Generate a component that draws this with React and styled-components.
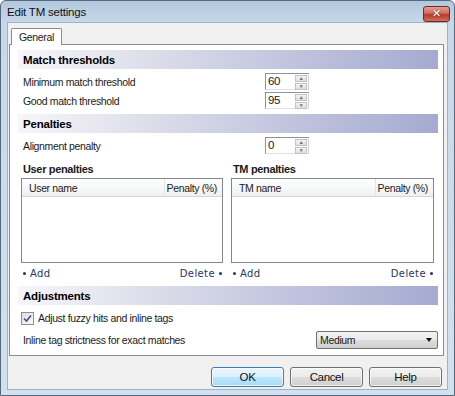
import React from 'react';
import styled, { createGlobalStyle } from 'styled-components';

const Global = createGlobalStyle`
  html, body { margin: 0; padding: 0; background: #ffffff; }
  body { font-family: 'Liberation Sans', Arial, sans-serif; font-size: 10.5px; letter-spacing: -0.35px; color: #1a1a1a; }
  * { box-sizing: border-box; }
`;

const Window = styled.div`
  width: 455px;
  height: 396px;
  display: flex;
  flex-direction: column;
  background: linear-gradient(180deg, #b3c8dd 0px, #c8d8ea 22px, #d2e0ef 100%);
  border: 1px solid #55687e;
  border-radius: 6px 6px 0 0;
  overflow: hidden;
`;

const TitleBar = styled.div`
  height: 21px;
  display: flex;
  align-items: center;
  justify-content: space-between;
  padding: 1px 4px 0 6px;
  font-size: 11.5px;
  letter-spacing: -0.2px;
  color: #111;
`;

const CloseButton = styled.div`
  width: 27px;
  height: 16px;
  margin-top: 3px;
  border: 1px solid #6b2b26;
  border-radius: 3px;
  background: linear-gradient(180deg, #e2a296 0%, #cf6b5c 45%, #b8392b 55%, #d1705c 100%);
  display: flex;
  align-items: center;
  justify-content: center;
  color: #fff;
  font-weight: bold;
  font-size: 11px;
  font-family: 'DejaVu Sans', sans-serif;
  text-shadow: 0 0 2px #6b2b26;
`;

const Client = styled.div`
  flex: 1;
  margin: 0 6px 5px 6px;
  background: #f0f0f0;
  border: 1px solid #9fb1c4;
  padding: 5px 5px 0 1px;
  display: flex;
  flex-direction: column;
`;

const TabStrip = styled.div`
  display: flex;
  padding-left: 2px;
  height: 17px;
  position: relative;
  z-index: 1;
`;

const Tab = styled.div`
  height: 17px;
  padding: 0 7px;
  background: #ffffff;
  border: 1px solid #898c95;
  border-bottom: none;
  border-radius: 2px 2px 0 0;
  display: flex;
  align-items: center;
`;

const Panel = styled.div`
  width: 435px;
  height: 312px;
  margin-top: -1px;
  background: #ffffff;
  border: 1px solid #898c95;
  padding: 5px 5px 0 8px;
  display: flex;
  flex-direction: column;
`;

const SectionHeader = styled.div`
  height: 19px;
  flex-shrink: 0;
  display: flex;
  align-items: center;
  padding-left: 5px;
  margin-top: ${p => p.$top || 0}px;
  background: linear-gradient(90deg, #f6f6f9 0%, #d9dbe8 35%, #bcc0dc 70%, #a6aad0 100%);
  font-weight: bold;
  font-size: 11.5px;
  letter-spacing: -0.2px;
  color: #000;
`;

const FieldRow = styled.div`
  display: flex;
  align-items: center;
  height: 17px;
  padding-left: 5px;
  margin-top: ${p => p.$top || 0}px;
`;

const FieldLabel = styled.div`
  width: 242px;
`;

const Spinner = styled.div`
  display: flex;
  width: 44px;
  height: 17px;
  border: 1px solid #8d939c;
  border-right-color: #cfd3d9;
  border-bottom-color: #dde1e6;
  background: #fff;
`;

const SpinValue = styled.div`
  flex: 1;
  padding-left: 2px;
  font-size: 11.5px;
  line-height: 15px;
`;

const SpinButtons = styled.div`
  width: 13px;
  display: flex;
  flex-direction: column;
  gap: 1px;
  padding: 1px 1px 1px 0;
`;

const SpinArrow = styled.div`
  flex: 1;
  background: linear-gradient(180deg, #f4f4f4, #dedede);
  border: 1px solid #c3c3c3;
  display: flex;
  align-items: center;
  justify-content: center;
  font-size: 5px;
  color: #6d6d6d;
  line-height: 1;
`;

const Lists = styled.div`
  display: grid;
  grid-template-columns: 202px 203px;
  gap: 8px;
  margin: 8px 4px 0 3px;
`;

const ListBlock = styled.div`
  display: flex;
  flex-direction: column;
`;

const ListTitle = styled.div`
  font-weight: bold;
  font-size: 11px;
  height: 14px;
  line-height: 14px;
  padding-left: 2px;
  margin-bottom: 2px;
`;

const ListView = styled.div`
  height: 85px;
  border: 1px solid #828790;
  background: #fff;
`;

const ListHeader = styled.div`
  display: flex;
  height: 18px;
  border-bottom: 1px solid #d5d5d5;
  background: linear-gradient(180deg, #ffffff 0%, #f7f8fa 50%, #eef0f3 100%);
`;

const HeaderCell = styled.div`
  flex: ${p => (p.$grow ? 1 : 'none')};
  width: ${p => (p.$w ? `${p.$w}px` : 'auto')};
  display: flex;
  align-items: center;
  justify-content: ${p => (p.$right ? 'flex-end' : 'flex-start')};
  padding: ${p => (p.$right ? '0 5px 0 2px' : '0 4px 0 7px')};
  border-left: ${p => (p.$divider ? '1px solid #e3e4e6' : 'none')};
  white-space: nowrap;
  color: #222;
`;

const LinkRow = styled.div`
  display: flex;
  justify-content: space-between;
  height: 14px;
  margin-top: 3px;
  padding: 0 1px 0 2px;
  font-family: 'DejaVu Sans', Verdana, sans-serif;
  font-size: 10px;
  letter-spacing: 0.4px;
  color: #2b3566;
`;

const Link = styled.span`
  display: flex;
  align-items: center;
  gap: 4px;
`;

const Bullet = styled.span`
  width: 3px;
  height: 3px;
  border-radius: 50%;
  background: #2b3566;
`;

const CheckRow = styled.div`
  display: flex;
  align-items: center;
  gap: 4px;
  margin: 6px 0 0 3px;
  height: 14px;
`;

const CheckBox = styled.div`
  width: 13px;
  height: 13px;
  border: 1px solid #8f8f8f;
  background: linear-gradient(135deg, #dcdcdc, #fafafa);
  display: flex;
  align-items: center;
  justify-content: center;
`;

const SelectRow = styled.div`
  display: flex;
  align-items: center;
  justify-content: space-between;
  padding-left: 5px;
  margin-top: 6px;
  height: 18px;
`;

const Select = styled.div`
  width: 122px;
  height: 18px;
  border: 1px solid #707070;
  border-radius: 2px;
  background: linear-gradient(180deg, #f2f2f2 0%, #ebebeb 50%, #dddddd 51%, #cfcfcf 100%);
  display: flex;
  align-items: center;
  justify-content: space-between;
  padding: 0 5px 0 3px;
`;

const Caret = styled.span`
  width: 0;
  height: 0;
  border-left: 3px solid transparent;
  border-right: 3px solid transparent;
  border-top: 4px solid #111;
`;

const ButtonRow = styled.div`
  display: flex;
  justify-content: flex-end;
  gap: 6px;
  margin-top: 11px;
`;

const Button = styled.div`
  width: 73px;
  height: 20px;
  border: 1px solid ${p => (p.$default ? '#3c7fb1' : '#707070')};
  border-radius: 3px;
  background: ${p =>
    p.$default
      ? 'linear-gradient(180deg, #eaf6fd 0%, #d9f0fc 50%, #bee6fd 51%, #a7d9f5 100%)'
      : 'linear-gradient(180deg, #f2f2f2 0%, #ebebeb 50%, #dddddd 51%, #cfcfcf 100%)'};
  box-shadow: inset 0 0 0 1px rgba(255, 255, 255, 0.7);
  display: flex;
  align-items: center;
  justify-content: center;
  font-size: 11.5px;
  color: #111;
`;

const Spin = ({ value }) => (
  <Spinner>
    <SpinValue>{value}</SpinValue>
    <SpinButtons>
      <SpinArrow>▲</SpinArrow>
      <SpinArrow>▼</SpinArrow>
    </SpinButtons>
  </Spinner>
);

const PenaltyList = ({ title, nameCol }) => (
  <ListBlock>
    <ListTitle>{title}</ListTitle>
    <ListView>
      <ListHeader>
        <HeaderCell $grow>{nameCol}</HeaderCell>
        <HeaderCell $w={58} $right $divider>Penalty (%)</HeaderCell>
      </ListHeader>
    </ListView>
    <LinkRow>
      <Link><Bullet />Add</Link>
      <Link>Delete<Bullet /></Link>
    </LinkRow>
  </ListBlock>
);

const App = () => (
  <>
    <Global />
    <Window>
      <TitleBar>
        <span>Edit TM settings</span>
        <CloseButton>✕</CloseButton>
      </TitleBar>
      <Client>
        <TabStrip>
          <Tab>General</Tab>
        </TabStrip>
        <Panel>
          <SectionHeader>Match thresholds</SectionHeader>
          <FieldRow $top={4}>
            <FieldLabel>Minimum match threshold</FieldLabel>
            <Spin value="60" />
          </FieldRow>
          <FieldRow $top={2}>
            <FieldLabel>Good match threshold</FieldLabel>
            <Spin value="95" />
          </FieldRow>
          <SectionHeader $top={5}>Penalties</SectionHeader>
          <FieldRow $top={4}>
            <FieldLabel>Alignment penalty</FieldLabel>
            <Spin value="0" />
          </FieldRow>
          <Lists>
            <PenaltyList title="User penalties" nameCol="User name" />
            <PenaltyList title="TM penalties" nameCol="TM name" />
          </Lists>
          <SectionHeader $top={6}>Adjustments</SectionHeader>
          <CheckRow>
            <CheckBox>
              <svg width="9" height="9" viewBox="0 0 9 9">
                <path d="M1 4.5 L3.5 7 L8 1.5" fill="none" stroke="#3b4f8f" strokeWidth="1.6" />
              </svg>
            </CheckBox>
            <span>Adjust fuzzy hits and inline tags</span>
          </CheckRow>
          <SelectRow>
            <span>Inline tag strictness for exact matches</span>
            <Select>
              <span>Medium</span>
              <Caret />
            </Select>
          </SelectRow>
        </Panel>
        <ButtonRow>
          <Button $default>OK</Button>
          <Button>Cancel</Button>
          <Button>Help</Button>
        </ButtonRow>
      </Client>
    </Window>
  </>
);

export default App;
